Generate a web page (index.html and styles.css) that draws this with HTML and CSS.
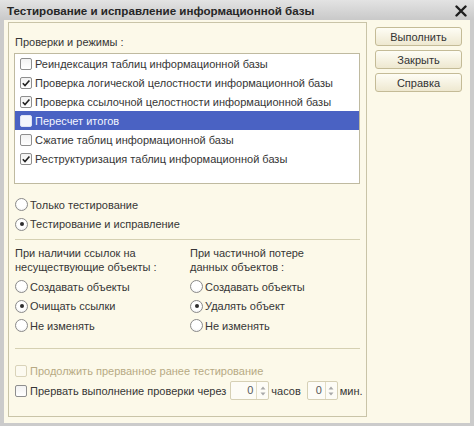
FILE: index.html
```html
<!DOCTYPE html>
<html lang="ru">
<head>
<meta charset="utf-8">
<title>Тестирование и исправление информационной базы</title>
<link rel="stylesheet" href="styles.css">
</head>
<body>
<div class="window">
  <div class="titlebar">
    <span class="title">Тестирование и исправление информационной базы</span>
    <svg class="close" width="12" height="12" viewBox="0 0 12 12"><path d="M1.5 1.5 L10.5 10.5 M10.5 1.5 L1.5 10.5" stroke="#1e1e1e" stroke-width="2.4" stroke-linecap="round"/></svg>
  </div>
  <div class="client">
    <div class="group">
      <div class="caption">Проверки и режимы :</div>
      <div class="list">
        <div class="row"><span class="cb"></span><span>Реиндексация таблиц информационной базы</span></div>
        <div class="row"><span class="cb"><svg viewBox="0 0 10 10"><path d="M1.8 5.2 L4 7.6 L8.4 2.4"/></svg></span><span>Проверка логической целостности информационной базы</span></div>
        <div class="row"><span class="cb"><svg viewBox="0 0 10 10"><path d="M1.8 5.2 L4 7.6 L8.4 2.4"/></svg></span><span>Проверка ссылочной целостности информационной базы</span></div>
        <div class="row sel"><span class="cb"></span><span>Пересчет итогов</span></div>
        <div class="row"><span class="cb"></span><span>Сжатие таблиц информационной базы</span></div>
        <div class="row"><span class="cb"><svg viewBox="0 0 10 10"><path d="M1.8 5.2 L4 7.6 L8.4 2.4"/></svg></span><span>Реструктуризация таблиц информационной базы</span></div>
      </div>
      <div class="modes">
        <div class="opt"><span class="radio"></span>Только тестирование</div>
        <div class="opt"><span class="radio on"></span>Тестирование и исправление</div>
      </div>
      <div class="sep"></div>
      <div class="cols">
        <div class="col left">
          <div class="hint">При наличии ссылок на<br>несуществующие объекты :</div>
          <div class="radios">
            <div class="opt"><span class="radio"></span>Создавать объекты</div>
            <div class="opt"><span class="radio on"></span>Очищать ссылки</div>
            <div class="opt"><span class="radio"></span>Не изменять</div>
          </div>
        </div>
        <div class="col">
          <div class="hint">При частичной потере<br>данных объектов :</div>
          <div class="radios">
            <div class="opt"><span class="radio"></span>Создавать объекты</div>
            <div class="opt"><span class="radio on"></span>Удалять объект</div>
            <div class="opt"><span class="radio"></span>Не изменять</div>
          </div>
        </div>
      </div>
      <div class="sep sep2"></div>
      <div class="extra">
        <div class="opt chk disabled"><span class="cb"></span>Продолжить прерванное ранее тестирование</div>
        <div class="opt chk"><span class="cb"></span><span>Прервать выполнение проверки через</span><span class="spin wide"><span class="val">0</span><span class="arrows"><svg viewBox="0 0 6 12"><path d="M0.5 4.5 L3 1.5 L5.5 4.5 Z M0.5 7.5 L3 10.5 L5.5 7.5 Z"/></svg></span></span><span class="unit">часов</span><span class="spin"><span class="val">0</span><span class="arrows"><svg viewBox="0 0 6 12"><path d="M0.5 4.5 L3 1.5 L5.5 4.5 Z M0.5 7.5 L3 10.5 L5.5 7.5 Z"/></svg></span></span><span class="unit">мин.</span></div>
      </div>
    </div>
    <div class="buttons">
      <button class="btn">Выполнить</button>
      <button class="btn">Закрыть</button>
      <button class="btn">Справка</button>
    </div>
  </div>
</div>
</body>
</html>
```

FILE: styles.css
```css
* { box-sizing: border-box; }

body {
  margin: 0;
  width: 474px;
  height: 426px;
  overflow: hidden;
  background: #cbcbcb;
  font: 11px "Liberation Sans", Arial, sans-serif;
  color: #363636;
}

.window {
  display: flex;
  flex-direction: column;
  height: 426px;
}

.titlebar {
  height: 20px;
  flex: none;
  display: flex;
  align-items: center;
  justify-content: space-between;
  padding: 1px 7px 0 7px;
  background: linear-gradient(#e3e3e3, #c9c9c9);
}

.title {
  font-weight: bold;
  font-size: 11.6px;
  color: #262626;
}

.close { display: block; }

.client {
  flex: 1;
  margin: 0 4px 3px 4px;
  background: #fcf9e9;
  display: flex;
  align-items: flex-start;
  padding: 2px 0 0 4px;
}

.group {
  width: 359px;
  height: 395px;
  flex: none;
  border: 1px solid #c9c4a8;
  padding: 0 6px;
  display: flex;
  flex-direction: column;
}

.caption {
  line-height: 14px;
  margin-top: 12px;
  margin-bottom: 4px;
}

.list {
  height: 131px;
  background: #fff;
  border: 1px solid #bfbaa0;
  margin-left: -1px;
}

.row {
  height: 19px;
  display: flex;
  align-items: center;
  padding-left: 5px;
  gap: 3px;
  white-space: nowrap;
}

.row.sel {
  background: #4a62c3;
  color: #f4f6ff;
}

.cb {
  width: 12px;
  height: 12px;
  flex: none;
  border: 1px solid #8e8e8e;
  border-radius: 2px;
  background: linear-gradient(#f2f2f2, #fff);
  display: flex;
  align-items: center;
  justify-content: center;
}

.cb svg {
  width: 10px;
  height: 10px;
  fill: none;
  stroke: #222;
  stroke-width: 1.6;
}

.row.sel .cb {
  border-color: #dfe3f5;
  background: #f3f5fc;
}

.modes { margin-top: 11px; }

.opt {
  height: 19.5px;
  display: flex;
  align-items: center;
  gap: 2px;
  white-space: nowrap;
}

.radio {
  width: 13px;
  height: 13px;
  flex: none;
  border: 1px solid #8a8a8a;
  border-radius: 50%;
  background: radial-gradient(circle at 50% 40%, #fff 50%, #e9e9e9);
  display: flex;
  align-items: center;
  justify-content: center;
}

.radio.on::after {
  content: "";
  width: 4px;
  height: 4px;
  border-radius: 50%;
  background: #2e2e2e;
}

.sep {
  height: 1px;
  background: #d5d0b2;
  margin-top: 5px;
}

.cols {
  display: flex;
  margin-top: 6px;
}

.col.left { width: 175px; flex: none; }

.hint { line-height: 14px; }

.radios { margin-top: 3px; }

.sep2 { margin-top: 12px; }

.extra { margin-top: 12px; }

.extra .opt { height: 20px; }

.chk { gap: 0; }

.chk .cb { margin-right: 3px; }

.disabled { color: #b7aa84; }

.disabled .cb {
  border-color: #d9d3b9;
  background: #fcfaf0;
}

.spin {
  display: flex;
  flex: none;
  height: 19px;
  width: 31px;
  margin-left: 6px;
  border: 1px solid #d6d0b5;
  border-radius: 2px;
  background: #fdfcf6;
  color: #5a5a5a;
}

.spin.wide { width: 39px; margin-left: 4px; }

.val {
  flex: 1;
  text-align: right;
  padding-right: 3px;
  line-height: 17px;
}

.arrows {
  width: 12px;
  flex: none;
  border-left: 1px solid #e2ddc6;
  display: flex;
  align-items: center;
  justify-content: center;
}

.arrows svg {
  width: 6px;
  height: 12px;
  fill: #a9a9a9;
}

.unit { margin-left: 2px; }

.buttons {
  display: flex;
  flex-direction: column;
  gap: 4px;
  margin: 5px 0 0 8px;
}

.btn {
  width: 87px;
  height: 19px;
  padding: 0;
  font: inherit;
  color: #333;
  border: 1px solid #c4bb97;
  border-radius: 3px;
  background: linear-gradient(#fefdf5, #eee8d0);
}
```
